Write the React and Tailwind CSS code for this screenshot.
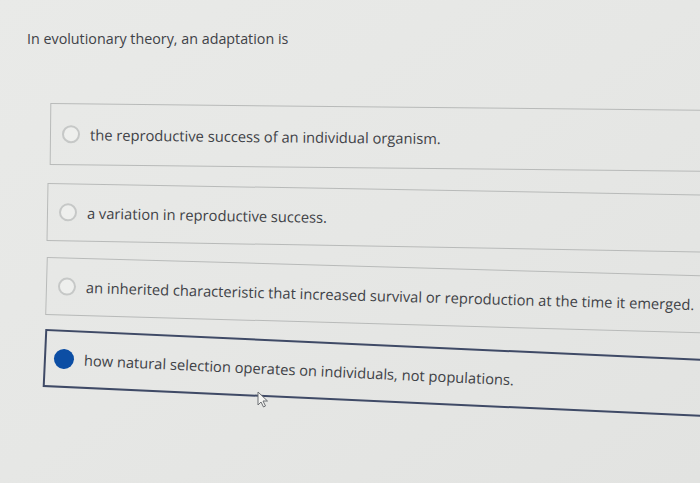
import React from "react";

const options = [
  { text: "the reproductive success of an individual organism.", ml: "ml-[50px]", h: "h-[62px]", tilt: "rotate-[0.6deg]", mt: "mt-0" },
  { text: "a variation in reproductive success.", ml: "ml-[47px]", h: "h-[58px]", tilt: "rotate-[1deg]", mt: "mt-[18px]" },
  {
    text: "an inherited characteristic that increased survival or reproduction at the time it emerged.",
    ml: "ml-[46px]",
    h: "h-[58px]",
    tilt: "rotate-[1.6deg]",
    mt: "mt-[16px]",
  },
  {
    text: "how natural selection operates on individuals, not populations.",
    ml: "ml-[44px]",
    h: "h-[58px]",
    tilt: "rotate-[2.6deg]",
    mt: "mt-[14px]",
    selected: true,
  },
];

function Radio({ selected }) {
  if (selected) {
    return <span className="w-[20px] h-[20px] shrink-0 rounded-full bg-[#0c4ea4]" />;
  }
  return <span className="w-[18px] h-[18px] shrink-0 rounded-full border-2 border-[#c6c8c7] bg-[#eeefed]" />;
}

export default function App() {
  return (
    <div
      className="relative w-[700px] h-[483px] overflow-hidden bg-gradient-to-br from-[#e9eae8] via-[#e6e7e5] to-[#e2e3e1] text-[#3f4247]"
      style={{ fontFamily: '"Open Sans", "Noto Sans", sans-serif' }}
    >
      <p className="pl-[27px] pt-[28px] text-[14.3px] leading-[22px]">In evolutionary theory, an adaptation is</p>

      <div className="flex flex-col mt-[53px]">
        {options.map((o) => (
          <div
            key={o.text}
            className={`${o.ml} ${o.mt} ${o.h} ${o.tilt} origin-left w-[760px] flex items-center gap-[10px] whitespace-nowrap text-[14.7px] ${
              o.selected ? "border-2 border-[#3f4a66] pl-[8px]" : "border border-[#b8bab9] pl-[11px]"
            }`}
          >
            <Radio selected={o.selected} />
            <span>{o.text}</span>
          </div>
        ))}
      </div>

      <svg className="absolute left-[257px] top-[391px]" width="12" height="17" viewBox="0 0 12 17">
        <path d="M1 1 L1 14 L4 11 L6.5 16 L8.5 15 L6 10 L10.5 10 Z" fill="#f4f4f2" stroke="#6b6e72" strokeWidth="1" />
      </svg>
    </div>
  );
}
